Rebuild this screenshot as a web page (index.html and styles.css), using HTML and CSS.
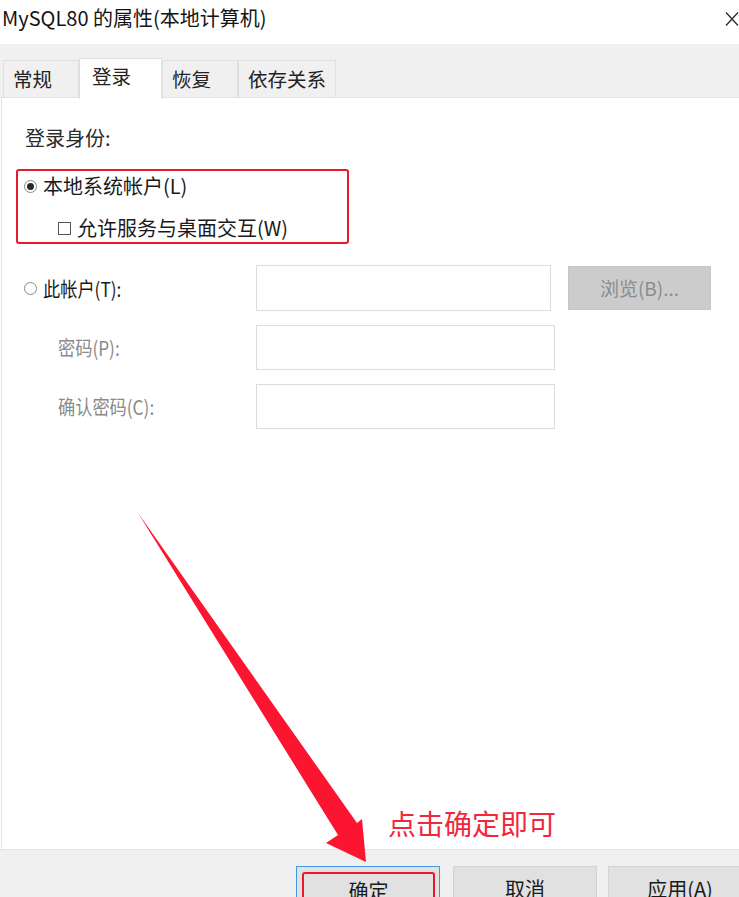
FILE: index.html
```html
<!DOCTYPE html>
<html>
<head>
    <meta charset="utf-8">
    <title>MySQL80 的属性(本地计算机)</title>
    <link rel="stylesheet" href="styles.css">
</head>
<body>
<div class="dialog">
    <div class="titlebar">
        <span class="title">MySQL80 的属性(本地计算机)</span>
        <svg class="close" width="14" height="16" viewBox="0 0 14 16">
            <path d="M1 1.5 L13 14.5 M13 1.5 L1 14.5" stroke="#2b2b2b" stroke-width="1.3" fill="none"/>
        </svg>
    </div>

    <div class="tabs">
        <div class="tab">常规</div>
        <div class="tab active">登录</div>
        <div class="tab">恢复</div>
        <div class="tab">依存关系</div>
    </div>

    <div class="panel">
        <div class="section-label">登录身份:</div>

        <div class="mark-box">
            <div class="option">
                <span class="radio checked"></span>
                <span>本地系统帐户(L)</span>
            </div>
            <div class="option sub">
                <span class="check"></span>
                <span>允许服务与桌面交互(W)</span>
            </div>
        </div>

        <div class="field first">
            <div class="field-label account">
                <span class="radio"></span>
                <span class="narrow">此帐户(T):</span>
            </div>
            <div class="input short"></div>
            <div class="browse">浏览(B)...</div>
        </div>
        <div class="field">
            <div class="field-label muted"><span class="narrow">密码(P):</span></div>
            <div class="input"></div>
        </div>
        <div class="field">
            <div class="field-label muted"><span class="narrow">确认密码(C):</span></div>
            <div class="input"></div>
        </div>
    </div>

    <div class="footer">
        <div class="btn default"><span class="btn-face">确定</span></div>
        <div class="btn">取消</div>
        <div class="btn">应用(A)</div>
    </div>
</div>

<!-- annotation drawn over the dialog -->
<svg class="arrow" width="739" height="897" viewBox="0 0 739 897">
    <polygon points="138,513 357,823 362,819 366,862 326,843 338,835" fill="#fb1530"/>
</svg>
<div class="note">点击确定即可</div>
</body>
</html>
```

FILE: styles.css
```css
body {
    margin: 0;
    width: 739px;
    height: 897px;
    overflow: hidden;
    position: relative;
    background-color: #fff;
    font-family: "Noto Sans CJK SC", "Liberation Sans", sans-serif;
    color: #1f1f1f;
}

.dialog {
    display: flex;
    flex-direction: column;
    height: 897px;
}

/* title bar */
.titlebar {
    height: 44px;
    display: flex;
    justify-content: space-between;
    align-items: flex-start;
    padding-left: 2px;
}

.title {
    font-size: 20px;
    line-height: 36px;
    color: #141414;
}

.close {
    margin-top: 11px;
}

/* tabs */
.tabs {
    height: 54px;
    box-sizing: border-box;
    background-color: #f0f0f0;
    border-bottom: 1px solid #e2e2e2;
    display: flex;
    align-items: flex-end;
    padding-left: 3px;
}

.tab {
    min-width: 76px;
    height: 37px;
    box-sizing: border-box;
    border: 1px solid #e0e0e0;
    border-bottom: none;
    padding: 0 9px;
    font-size: 19.5px;
    line-height: 35px;
    color: #222;
}

.tab.active {
    min-width: 83px;
    height: 41px;
    line-height: 34px;
    padding-left: 12px;
    background-color: #fff;
    margin-bottom: -2px;
    position: relative;
}

/* main panel */
.panel {
    height: 751px;
    box-sizing: border-box;
    margin-left: 1px;
    border-left: 1px solid #e3e3e3;
    padding-top: 26px;
    font-size: 20px;
}

.section-label {
    line-height: 28px;
    padding-left: 23px;
    color: #2a2a2a;
}

.mark-box {
    width: 333px;
    height: 75px;
    box-sizing: border-box;
    margin: 17px 0 0 14px;
    border: 2px solid #e8192c;
    border-radius: 3px;
    padding: 2px 0 0 6px;
}

.option {
    display: flex;
    align-items: center;
    line-height: 26px;
    height: 26px;
    color: #1a1a1a;
}

.option.sub {
    margin-top: 16px;
    padding-left: 34px;
}

.radio {
    width: 11px;
    height: 11px;
    border: 1px solid #8a8a8a;
    border-radius: 50%;
    margin-right: 6px;
    position: relative;
    flex: none;
}

.radio.checked::after {
    content: "";
    position: absolute;
    left: 2px;
    top: 2px;
    width: 7px;
    height: 7px;
    border-radius: 50%;
    background-color: #2a2a2a;
}

.check {
    width: 11px;
    height: 11px;
    border: 1px solid #555;
    margin-right: 6px;
    flex: none;
}

/* account fields */
.field {
    display: flex;
    align-items: center;
    margin-top: 14px;
}

.field.first {
    margin-top: 21px;
}

.field-label {
    width: 198px;
    padding-left: 56px;
    display: flex;
    align-items: center;
    color: #1a1a1a;
}

.field-label.account {
    padding-left: 22px;
    width: 232px;
}

.field-label.muted {
    color: #8a8a8a;
}

.narrow {
    display: inline-block;
    transform: scaleX(0.86);
    transform-origin: left center;
}

.input {
    width: 299px;
    height: 45px;
    box-sizing: border-box;
    border: 1px solid #dcdcdc;
    background-color: #fff;
}

.input.short {
    width: 295px;
    height: 46px;
}

.browse {
    width: 143px;
    height: 44px;
    box-sizing: border-box;
    margin-left: 17px;
    background-color: #cccccc;
    border: 1px solid #c6c6c6;
    color: #8c8c8c;
    font-size: 19px;
    line-height: 42px;
    text-align: center;
}

/* footer buttons */
.footer {
    flex: 1;
    background-color: #f0f0f0;
    border-top: 1px solid #e4e4e4;
    display: flex;
    align-items: flex-start;
    padding: 16px 0 0 296px;
    gap: 13px;
    overflow: hidden;
}

.btn {
    width: 144px;
    height: 46px;
    box-sizing: border-box;
    flex: none;
    background-color: #e1e1e1;
    border: 1px solid #d2d2d2;
    font-size: 20px;
    line-height: 44px;
    text-align: center;
    color: #1a1a1a;
}

.btn + .btn + .btn {
    margin-left: -2px;
}

.btn.default {
    border-color: #3f98e2;
    padding: 5px 4px 0 5px;
}

.btn-face {
    display: block;
    height: 40px;
    box-sizing: border-box;
    border: 2px solid #e8192c;
    border-radius: 3px;
    line-height: 34px;
}

/* red annotation */
.arrow {
    position: absolute;
    left: 0;
    top: 0;
    pointer-events: none;
}

.note {
    position: absolute;
    left: 388px;
    top: 804px;
    font-size: 28px;
    line-height: 38px;
    color: #f0283c;
}
```
